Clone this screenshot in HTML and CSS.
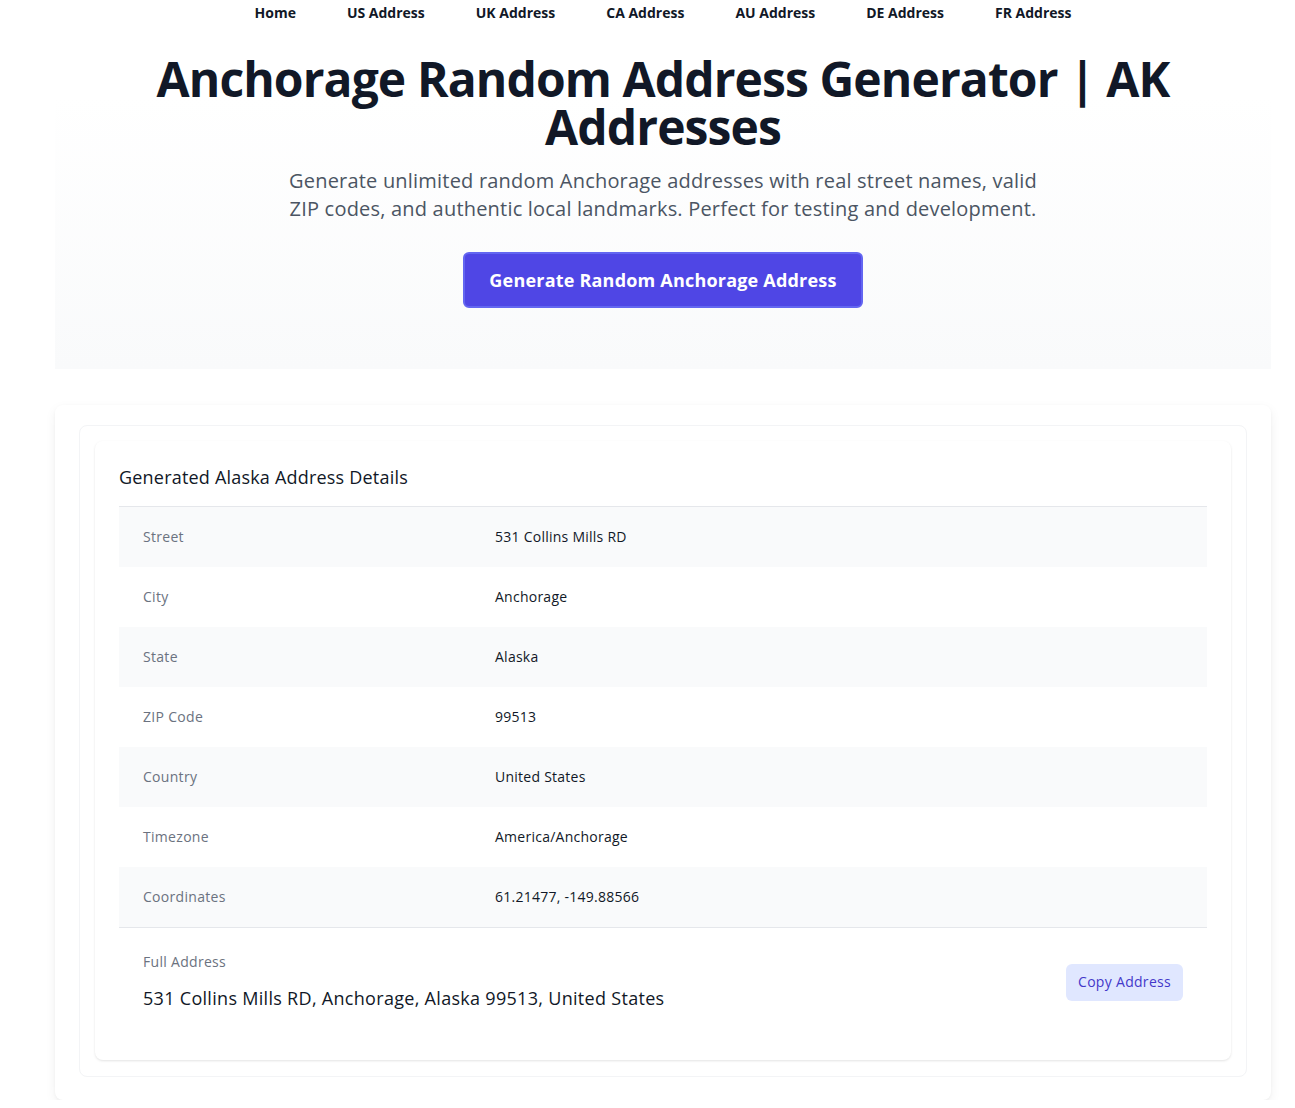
FILE: index.html
```html
<!DOCTYPE html>
<html lang="en">
<head>
<meta charset="utf-8">
<title>Anchorage Random Address Generator | AK Addresses</title>
<link rel="stylesheet" href="styles.css">
</head>
<body>
<nav class="nav">
  <a href="#">Home</a>
  <a href="#">US Address</a>
  <a href="#">UK Address</a>
  <a href="#">CA Address</a>
  <a href="#">AU Address</a>
  <a href="#">DE Address</a>
  <a href="#">FR Address</a>
</nav>
<main class="page">
  <section class="hero">
    <h1 class="hero-title">Anchorage Random Address Generator | AK Addresses</h1>
    <p class="hero-sub">Generate unlimited random Anchorage addresses with real street names, valid ZIP codes, and authentic local landmarks. Perfect for testing and development.</p>
    <button class="btn-primary" type="button">Generate Random Anchorage Address</button>
  </section>
  <section class="outer-card">
    <div class="mid-card">
      <div class="detail-card">
        <h2 class="detail-title">Generated Alaska Address Details</h2>
        <div class="rows">
          <div class="row alt"><span class="label">Street</span><span class="value">531 Collins Mills RD</span></div>
          <div class="row"><span class="label">City</span><span class="value">Anchorage</span></div>
          <div class="row alt"><span class="label">State</span><span class="value">Alaska</span></div>
          <div class="row"><span class="label">ZIP Code</span><span class="value">99513</span></div>
          <div class="row alt"><span class="label">Country</span><span class="value">United States</span></div>
          <div class="row"><span class="label">Timezone</span><span class="value">America/Anchorage</span></div>
          <div class="row alt"><span class="label">Coordinates</span><span class="value">61.21477, -149.88566</span></div>
        </div>
        <div class="full">
          <div class="full-text">
            <div class="full-label">Full Address</div>
            <div class="full-value">531 Collins Mills RD, Anchorage, Alaska 99513, United States</div>
          </div>
          <button class="btn-copy" type="button">Copy Address</button>
        </div>
      </div>
    </div>
  </section>
</main>
</body>
</html>
```

FILE: styles.css
```css
* { box-sizing: border-box; }
html, body { margin: 0; padding: 0; background: #ffffff; }
body {
  font-family: "Open Sans", "Liberation Sans", sans-serif;
  color: #111827;
  letter-spacing: 0.3px;
}
.nav {
  display: flex;
  justify-content: center;
  gap: 51px;
  height: 28px;
  padding-top: 3px;
  padding-left: 31px;
}
.nav a {
  font-size: 14px;
  line-height: 20px;
  font-weight: 700;
  letter-spacing: 0;
  color: #111827;
  text-decoration: none;
}
.page {
  width: 1216px;
  margin-left: 55px;
}
.hero {
  background: linear-gradient(to bottom, #ffffff 0%, #ffffff 20%, #f9fafb 100%);
  padding: 27px 32px 61px;
  text-align: center;
}
.hero-title {
  margin: 0;
  font-size: 48px;
  line-height: 48px;
  font-weight: 700;
  letter-spacing: -0.9px;
  color: #111827;
}
.hero-sub {
  max-width: 768px;
  margin: 16px auto 0;
  font-size: 20px;
  line-height: 28px;
  letter-spacing: 0.2px;
  color: #4b5563;
}
.btn-primary {
  margin-top: 29px;
  background: #4f46e5;
  border: 2px solid #6366f1;
  border-radius: 6px;
  color: #ffffff;
  font-family: inherit;
  font-size: 18px;
  line-height: 24px;
  font-weight: 700;
  letter-spacing: 0.2px;
  padding: 14px 24px;
  cursor: pointer;
}
.outer-card {
  margin-top: 36px;
  background: #ffffff;
  border-radius: 8px;
  box-shadow: 0 4px 12px rgba(0, 0, 0, 0.06), 0 1px 3px rgba(0, 0, 0, 0.04);
  padding: 20px 24px 23px;
}
.mid-card {
  border: 1px solid #f3f4f6;
  border-radius: 8px;
  padding: 15px 15px 16px;
}
.detail-card {
  background: #ffffff;
  border-radius: 8px;
  box-shadow: 0 1px 3px rgba(0, 0, 0, 0.08), 0 1px 2px rgba(0, 0, 0, 0.04);
  padding: 22px 24px 24px;
}
.detail-title {
  margin: 0;
  font-size: 18px;
  line-height: 28px;
  font-weight: 400;
  letter-spacing: 0.2px;
  color: #111827;
  padding-bottom: 15px;
  border-bottom: 1px solid #e5e7eb;
}
.row {
  display: grid;
  grid-template-columns: 376px 1fr;
  height: 60px;
  align-items: center;
  font-size: 14px;
  line-height: 20px;
}
.row.alt { background: #f9fafb; }
.label { padding-left: 24px; color: #6b7280; }
.value { color: #111827; letter-spacing: 0.25px; }
.full {
  border-top: 1px solid #e5e7eb;
  display: flex;
  justify-content: space-between;
  align-items: center;
  padding: 24px 24px 24px;
}
.full-label {
  font-size: 14px;
  line-height: 20px;
  color: #6b7280;
}
.full-value {
  margin-top: 12px;
  font-size: 18px;
  line-height: 28px;
  color: #111827;
}
.btn-copy {
  background: #e0e7ff;
  color: #4338ca;
  border: none;
  border-radius: 6px;
  font-family: inherit;
  font-size: 14px;
  line-height: 20px;
  letter-spacing: 0.3px;
  padding: 8px 12px;
  height: 37px;
  cursor: pointer;
}
```
